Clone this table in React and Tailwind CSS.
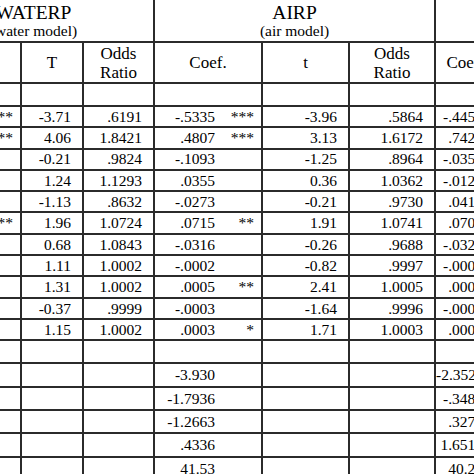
import React from "react";

// partial regression table: WATERP / AIRP / next model (cropped)
const rows = [
  { ws: "***", wt: "-3.71", wo: ".6191", ac: "-.5335", as: "***", at: "-3.96", ao: ".5864", nc: "-.4455" },
  { ws: "***", wt: "4.06", wo: "1.8421", ac: ".4807", as: "***", at: "3.13", ao: "1.6172", nc: ".7421" },
  { ws: "", wt: "-0.21", wo: ".9824", ac: "-.1093", as: "", at: "-1.25", ao: ".8964", nc: "-.0358" },
  { ws: "", wt: "1.24", wo: "1.1293", ac: ".0355", as: "", at: "0.36", ao: "1.0362", nc: "-.0125" },
  { ws: "", wt: "-1.13", wo: ".8632", ac: "-.0273", as: "", at: "-0.21", ao: ".9730", nc: ".0412" },
  { ws: "***", wt: "1.96", wo: "1.0724", ac: ".0715", as: "**", at: "1.91", ao: "1.0741", nc: ".0703" },
  { ws: "", wt: "0.68", wo: "1.0843", ac: "-.0316", as: "", at: "-0.26", ao: ".9688", nc: "-.0322" },
  { ws: "", wt: "1.11", wo: "1.0002", ac: "-.0002", as: "", at: "-0.82", ao: ".9997", nc: "-.0003" },
  { ws: "", wt: "1.31", wo: "1.0002", ac: ".0005", as: "**", at: "2.41", ao: "1.0005", nc: ".0005" },
  { ws: "", wt: "-0.37", wo: ".9999", ac: "-.0003", as: "", at: "-1.64", ao: ".9996", nc: "-.0004" },
  { ws: "", wt: "1.15", wo: "1.0002", ac: ".0003", as: "*", at: "1.71", ao: "1.0003", nc: ".0003" },
];

const fit = [
  { ac: "-3.930", nc: "-2.3521" },
  { ac: "-1.7936", nc: "-.3485" },
  { ac: "-1.2663", nc: ".3271" },
  { ac: ".4336", nc: "1.6518" },
  { ac: "41.53", nc: "40.22" },
];

const cell = "border-2 border-[#2b2b2b] p-0 leading-none text-[15.5px] text-black";
const head = "border-2 border-[#2b2b2b] p-0 text-[17px] leading-[19px] text-black text-center";
const num = `${cell} text-right pr-[11px]`;
const coef = `${cell} border-r-0 text-right pr-[11px]`;
const ncoef = `${cell} border-r-0 text-right pr-[18px]`;
const star = `${cell} border-l-0 text-right pr-[7px]`;

function Blank() {
  return (
    <>
      <td className={coef}></td>
      <td className={star}></td>
      <td className={num}></td>
      <td className={num}></td>
    </>
  );
}

export default function App() {
  return (
    <div className="w-[474px] h-[474px] overflow-hidden bg-white text-black font-['Liberation_Serif','Times_New_Roman',serif]">
      <table className="table-fixed border-collapse ml-[-88px] mt-[-2px]" style={{ width: 630 }}>
        <colgroup>
          <col className="w-[72px]" />
          <col className="w-[36px]" />
          <col className="w-[62px]" />
          <col className="w-[71px]" />
          <col className="w-[72px]" />
          <col className="w-[36px]" />
          <col className="w-[87px]" />
          <col className="w-[86px]" />
          <col className="w-[66px]" />
          <col className="w-[42px]" />
        </colgroup>
        <tbody>
          <tr className="h-[43px]">
            <td colSpan={4} className={`${head} align-top pt-[3px]`}>
              <div className="text-[19.5px] leading-[20px]">WATERP</div>
              <div className="text-[15.5px] leading-[16px]">(water model)</div>
            </td>
            <td colSpan={4} className={`${head} align-top pt-[3px]`}>
              <div className="text-[19.5px] leading-[20px]">AIRP</div>
              <div className="text-[15.5px] leading-[16px]">(air model)</div>
            </td>
            <td colSpan={2} className={head}></td>
          </tr>
          <tr className="h-[41px]">
            <td colSpan={2} className={head}>Coef.</td>
            <td className={head}>T</td>
            <td className={head}>Odds<br />Ratio</td>
            <td colSpan={2} className={head}>Coef.</td>
            <td className={head}>t</td>
            <td className={head}>Odds<br />Ratio</td>
            <td colSpan={2} className={`${head} pr-[48px]`}>Coef.</td>
          </tr>
          <tr className="h-[23px]">
            <Blank />
            <Blank />
            <td className={ncoef}></td>
            <td className={star}></td>
          </tr>
          {rows.map((r, i) => (
            <tr key={i} className="h-[21.3px]">
              <td className={coef}>.1234</td>
              <td className={star}>{r.ws}</td>
              <td className={num}>{r.wt}</td>
              <td className={num}>{r.wo}</td>
              <td className={coef}>{r.ac}</td>
              <td className={star}>{r.as}</td>
              <td className={num}>{r.at}</td>
              <td className={num}>{r.ao}</td>
              <td className={ncoef}>{r.nc}</td>
              <td className={star}></td>
            </tr>
          ))}
          <tr className="h-[23px]">
            <Blank />
            <Blank />
            <td className={ncoef}></td>
            <td className={star}></td>
          </tr>
          {fit.map((r, i) => (
            <tr key={i} className="h-[23.4px]">
              <Blank />
              <td className={coef}>{r.ac}</td>
              <td className={star}></td>
              <td className={num}></td>
              <td className={num}></td>
              <td className={ncoef}>{r.nc}</td>
              <td className={star}></td>
            </tr>
          ))}
        </tbody>
      </table>
    </div>
  );
}
